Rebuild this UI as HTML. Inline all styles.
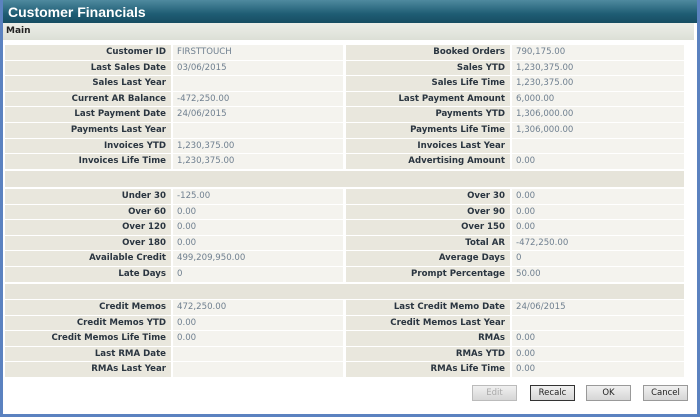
<!DOCTYPE html>
<html><head><meta charset="utf-8"><style>
*{margin:0;padding:0;box-sizing:border-box}
body{width:700px;height:417px;background:#fff;position:relative;overflow:hidden;font-family:"DejaVu Sans","Liberation Sans",sans-serif}
.frame{position:absolute;left:0;top:0;width:700px;height:417px;border:3px solid #5b82c0;border-top:none}
.title{position:absolute;left:0;top:0;width:700px;height:23px;background:linear-gradient(#4f8a9f,#1f5d74 60%,#174d62);color:#fff;font:bold 14px "Liberation Sans",sans-serif;padding:4px 0 0 8px}
.main{position:absolute;left:3px;top:23px;width:691px;height:17px;background:linear-gradient(#eceee8,#dcdfd6);font:bold 9px "DejaVu Sans",sans-serif;color:#222;padding:3px 0 0 3px}
.r{position:absolute;height:14.6px;font-size:8.6px;line-height:14.6px}
.l{position:absolute;top:0;height:100%;background:#e9e7dd;text-align:right;padding-right:5px;font-weight:bold;color:#2a3540;white-space:nowrap}
.v{position:absolute;top:0;height:100%;background:#f4f3ee;padding-left:4px;color:#708090;white-space:nowrap}
.sep{position:absolute;left:5px;width:679px;background:#e6e4da}
.btn{position:absolute;top:385px;height:16px;background:linear-gradient(#f0f0f0,#d6d6d6);border:1px solid #999;font-size:8.5px;line-height:14px;text-align:center;color:#222}
</style></head><body>
<div class="title">Customer Financials</div>
<div class="main">Main</div>
<div class="frame"></div>

<div class="r" style="top:45px;left:5px;width:338px"><div class="l" style="left:0;width:166px">Customer ID</div><div class="v" style="left:168px;width:170px">FIRSTTOUCH</div></div>
<div class="r" style="top:45px;left:346px;width:338px"><div class="l" style="left:0;width:164px">Booked Orders</div><div class="v" style="left:166px;width:172px">790,175.00</div></div>
<div class="r" style="top:60.6px;left:5px;width:338px"><div class="l" style="left:0;width:166px">Last Sales Date</div><div class="v" style="left:168px;width:170px">03/06/2015</div></div>
<div class="r" style="top:60.6px;left:346px;width:338px"><div class="l" style="left:0;width:164px">Sales YTD</div><div class="v" style="left:166px;width:172px">1,230,375.00</div></div>
<div class="r" style="top:76.2px;left:5px;width:338px"><div class="l" style="left:0;width:166px">Sales Last Year</div><div class="v" style="left:168px;width:170px"></div></div>
<div class="r" style="top:76.2px;left:346px;width:338px"><div class="l" style="left:0;width:164px">Sales Life Time</div><div class="v" style="left:166px;width:172px">1,230,375.00</div></div>
<div class="r" style="top:91.8px;left:5px;width:338px"><div class="l" style="left:0;width:166px">Current AR Balance</div><div class="v" style="left:168px;width:170px">-472,250.00</div></div>
<div class="r" style="top:91.8px;left:346px;width:338px"><div class="l" style="left:0;width:164px">Last Payment Amount</div><div class="v" style="left:166px;width:172px">6,000.00</div></div>
<div class="r" style="top:107.4px;left:5px;width:338px"><div class="l" style="left:0;width:166px">Last Payment Date</div><div class="v" style="left:168px;width:170px">24/06/2015</div></div>
<div class="r" style="top:107.4px;left:346px;width:338px"><div class="l" style="left:0;width:164px">Payments YTD</div><div class="v" style="left:166px;width:172px">1,306,000.00</div></div>
<div class="r" style="top:123px;left:5px;width:338px"><div class="l" style="left:0;width:166px">Payments Last Year</div><div class="v" style="left:168px;width:170px"></div></div>
<div class="r" style="top:123px;left:346px;width:338px"><div class="l" style="left:0;width:164px">Payments Life Time</div><div class="v" style="left:166px;width:172px">1,306,000.00</div></div>
<div class="r" style="top:138.6px;left:5px;width:338px"><div class="l" style="left:0;width:166px">Invoices YTD</div><div class="v" style="left:168px;width:170px">1,230,375.00</div></div>
<div class="r" style="top:138.6px;left:346px;width:338px"><div class="l" style="left:0;width:164px">Invoices Last Year</div><div class="v" style="left:166px;width:172px"></div></div>
<div class="r" style="top:154.2px;left:5px;width:338px"><div class="l" style="left:0;width:166px">Invoices Life Time</div><div class="v" style="left:168px;width:170px">1,230,375.00</div></div>
<div class="r" style="top:154.2px;left:346px;width:338px"><div class="l" style="left:0;width:164px">Advertising Amount</div><div class="v" style="left:166px;width:172px">0.00</div></div>

<div class="sep" style="top:171px;height:16px"></div>

<div class="r" style="top:189px;left:5px;width:338px"><div class="l" style="left:0;width:166px">Under 30</div><div class="v" style="left:168px;width:170px">-125.00</div></div>
<div class="r" style="top:189px;left:346px;width:338px"><div class="l" style="left:0;width:164px">Over 30</div><div class="v" style="left:166px;width:172px">0.00</div></div>
<div class="r" style="top:204.6px;left:5px;width:338px"><div class="l" style="left:0;width:166px">Over 60</div><div class="v" style="left:168px;width:170px">0.00</div></div>
<div class="r" style="top:204.6px;left:346px;width:338px"><div class="l" style="left:0;width:164px">Over 90</div><div class="v" style="left:166px;width:172px">0.00</div></div>
<div class="r" style="top:220.2px;left:5px;width:338px"><div class="l" style="left:0;width:166px">Over 120</div><div class="v" style="left:168px;width:170px">0.00</div></div>
<div class="r" style="top:220.2px;left:346px;width:338px"><div class="l" style="left:0;width:164px">Over 150</div><div class="v" style="left:166px;width:172px">0.00</div></div>
<div class="r" style="top:235.8px;left:5px;width:338px"><div class="l" style="left:0;width:166px">Over 180</div><div class="v" style="left:168px;width:170px">0.00</div></div>
<div class="r" style="top:235.8px;left:346px;width:338px"><div class="l" style="left:0;width:164px">Total AR</div><div class="v" style="left:166px;width:172px">-472,250.00</div></div>
<div class="r" style="top:251.4px;left:5px;width:338px"><div class="l" style="left:0;width:166px">Available Credit</div><div class="v" style="left:168px;width:170px">499,209,950.00</div></div>
<div class="r" style="top:251.4px;left:346px;width:338px"><div class="l" style="left:0;width:164px">Average Days</div><div class="v" style="left:166px;width:172px">0</div></div>
<div class="r" style="top:267px;left:5px;width:338px"><div class="l" style="left:0;width:166px">Late Days</div><div class="v" style="left:168px;width:170px">0</div></div>
<div class="r" style="top:267px;left:346px;width:338px"><div class="l" style="left:0;width:164px">Prompt Percentage</div><div class="v" style="left:166px;width:172px">50.00</div></div>

<div class="sep" style="top:284px;height:15px"></div>

<div class="r" style="top:300px;left:5px;width:338px"><div class="l" style="left:0;width:166px">Credit Memos</div><div class="v" style="left:168px;width:170px">472,250.00</div></div>
<div class="r" style="top:300px;left:346px;width:338px"><div class="l" style="left:0;width:164px">Last Credit Memo Date</div><div class="v" style="left:166px;width:172px">24/06/2015</div></div>
<div class="r" style="top:315.6px;left:5px;width:338px"><div class="l" style="left:0;width:166px">Credit Memos YTD</div><div class="v" style="left:168px;width:170px">0.00</div></div>
<div class="r" style="top:315.6px;left:346px;width:338px"><div class="l" style="left:0;width:164px">Credit Memos Last Year</div><div class="v" style="left:166px;width:172px"></div></div>
<div class="r" style="top:331.2px;left:5px;width:338px"><div class="l" style="left:0;width:166px">Credit Memos Life Time</div><div class="v" style="left:168px;width:170px">0.00</div></div>
<div class="r" style="top:331.2px;left:346px;width:338px"><div class="l" style="left:0;width:164px">RMAs</div><div class="v" style="left:166px;width:172px">0.00</div></div>
<div class="r" style="top:346.8px;left:5px;width:338px"><div class="l" style="left:0;width:166px">Last RMA Date</div><div class="v" style="left:168px;width:170px"></div></div>
<div class="r" style="top:346.8px;left:346px;width:338px"><div class="l" style="left:0;width:164px">RMAs YTD</div><div class="v" style="left:166px;width:172px">0.00</div></div>
<div class="r" style="top:362.4px;left:5px;width:338px"><div class="l" style="left:0;width:166px">RMAs Last Year</div><div class="v" style="left:168px;width:170px"></div></div>
<div class="r" style="top:362.4px;left:346px;width:338px"><div class="l" style="left:0;width:164px">RMAs Life Time</div><div class="v" style="left:166px;width:172px">0.00</div></div>

<div class="btn" style="left:472px;width:45px;color:#aaa;border-color:#bbb">Edit</div>
<div class="btn" style="left:530px;width:45px;border:1px solid #333">Recalc</div>
<div class="btn" style="left:586px;width:45px">OK</div>
<div class="btn" style="left:643px;width:45px">Cancel</div>
</body></html>
